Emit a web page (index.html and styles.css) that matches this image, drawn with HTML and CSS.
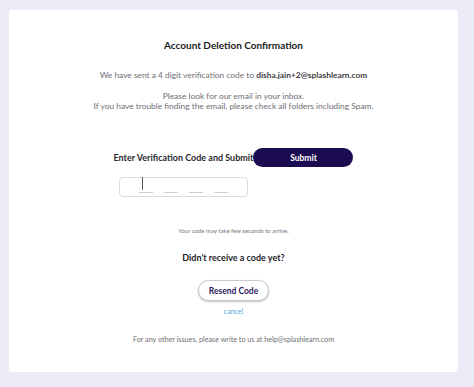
FILE: index.html
```html
<!DOCTYPE html>
<html lang="en">
<head>
<meta charset="UTF-8">
<title>Account Deletion Confirmation</title>
<link rel="stylesheet" href="styles.css">
</head>
<body>

<div id="card">
  <h3 class="title">Account Deletion Confirmation</h3>
  <p class="sent">We have sent a 4 digit verification code to <b>disha.jain+2@splashlearn.com</b></p>
  <p class="info">Please look for our email in your inbox.<br>If you have trouble finding the email, please check all folders including Spam.</p>

  <div id="form">
    <div class="form-row">
      <span class="label">Enter Verification Code and Submit</span>
      <button class="submit-btn">Submit</button>
    </div>
    <div class="code-box">
      <span class="slot active"><i class="cursor"></i></span>
      <span class="slot"></span>
      <span class="slot"></span>
      <span class="slot"></span>
    </div>
  </div>

  <p class="note">Your code may take few seconds to arrive.</p>
  <p class="question">Didn't receive a code yet?</p>
  <button class="resend-btn">Resend Code</button>
  <a class="cancel" href="#">cancel</a>
  <p class="footer">For any other issues, please write to us at help@splashlearn.com</p>
</div>

</body>
</html>
```

FILE: styles.css
```css
body {
  margin: 0;
  background: #ebebf7;
  font-family: Lato, "Noto Sans", sans-serif;
  height: 387px;
  overflow: hidden;
}

#card {
  margin: 10px 16px 0 9px;
  height: 362px;
  box-sizing: border-box;
  background: #fff;
  border-radius: 3px;
  padding-top: 28px;
  display: flex;
  flex-direction: column;
  align-items: center;
  text-align: center;
}

p, h3 {
  margin: 0;
}

.title {
  font-size: 10px;
  line-height: 14px;
  font-weight: 700;
  color: #1c1c1c;
}

.sent {
  margin-top: 17px;
  font-size: 8.4px;
  line-height: 12px;
  color: #6e6e74;
}

.sent b {
  color: #3d3d44;
}

.info {
  margin-top: 10px;
  font-size: 8.4px;
  line-height: 10px;
  color: #6e6e74;
}

#form {
  margin-top: 37px;
  display: flex;
  flex-direction: column;
  align-items: flex-start;
}

.form-row {
  display: flex;
  align-items: center;
}

.label {
  font-size: 9px;
  font-weight: 700;
  color: #2a2a30;
}

.submit-btn {
  width: 100px;
  height: 19px;
  padding: 0;
  border: none;
  border-radius: 10px;
  background: #1b0b50;
  color: #fff;
  font-family: inherit;
  font-size: 8.5px;
  font-weight: 700;
}

.code-box {
  margin: 10px 0 0 5px;
  width: 129px;
  height: 20px;
  box-sizing: border-box;
  border: 1px solid #dcdce0;
  border-radius: 4px;
  display: flex;
  align-items: flex-end;
  gap: 11px;
  padding: 0 0 3px 19px;
}

.slot {
  width: 14px;
  height: 1px;
  background: #cfcfd4;
  position: relative;
}

.cursor {
  position: absolute;
  left: 3px;
  bottom: 3px;
  width: 1px;
  height: 13px;
  background: #55555c;
}

.note {
  margin-top: 30px;
  font-size: 6px;
  line-height: 8px;
  color: #77777d;
}

.question {
  margin-top: 17px;
  font-size: 9px;
  line-height: 12px;
  font-weight: 700;
  color: #222228;
}

.resend-btn {
  margin-top: 16px;
  width: 71px;
  height: 21px;
  padding: 0;
  background: #fff;
  border: 1px solid #c9c9d0;
  border-radius: 11px;
  box-shadow: 0 1px 2px rgba(0,0,0,0.25);
  color: #2b1a5e;
  font-family: inherit;
  font-size: 8.5px;
  font-weight: 700;
}

.cancel {
  margin-top: 5px;
  font-size: 7px;
  line-height: 10px;
  color: #4fa9d6;
  text-decoration: none;
}

.footer {
  margin-top: 19px;
  font-size: 7.2px;
  line-height: 10px;
  color: #6e6e74;
}
```
